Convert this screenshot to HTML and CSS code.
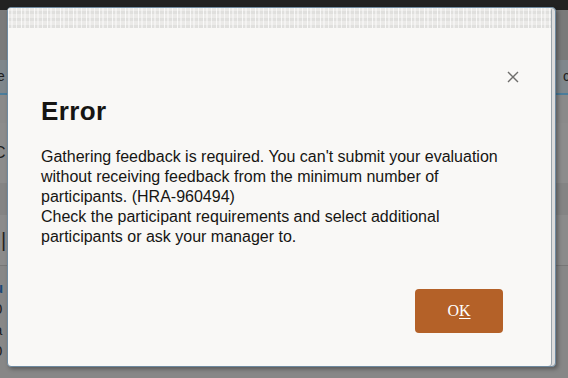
FILE: index.html
```html
<!DOCTYPE html>
<html>
<head>
<meta charset="utf-8">
<link rel="stylesheet" href="styles.css">
</head>
<body>
<div class="page">
  <div class="topbar"></div>
  <div class="header"></div>
  <div class="tabs"><span class="frag">e</span><span class="frag">c</span></div>
  <div class="row r1"></div>
  <div class="row r2"><span class="frag">C</span><span></span></div>
  <div class="row r3"></div>
  <div class="row r4"><span class="frag bar">|</span><span></span></div>
  <div class="list">
    <span class="frag blue">u</span>
    <span class="frag">0</span>
    <span class="frag">a</span>
    <span class="frag">0</span>
  </div>
</div>

<div class="dialog" role="dialog">
  <div class="texture"></div>
  <div class="dbody">
    <div class="closerow">
      <button class="close" aria-label="Close">
        <svg width="12" height="12" viewBox="0 0 12 12"><path d="M1 1 L11 11 M11 1 L1 11" stroke="#6f6e6c" stroke-width="1.4" fill="none"/></svg>
      </button>
    </div>
    <h1 class="title">Error</h1>
    <p class="msg">Gathering feedback is required. You can't submit your evaluation<br>without receiving feedback from the minimum number of<br>participants. (HRA-960494)<br>Check the participant requirements and select additional<br>participants or ask your manager to.</p>
    <div class="footer">
      <button class="ok">O<u>K</u></button>
    </div>
  </div>
</div>
</body>
</html>
```
FILE: styles.css
```css
html, body {
  margin: 0;
  padding: 0;
}
body {
  width: 568px;
  height: 378px;
  overflow: hidden;
  background: #858585;
  font-family: "Liberation Sans", Arial, sans-serif;
  position: relative;
}
.page {
  display: flex;
  flex-direction: column;
  height: 378px;
}
.topbar {
  height: 10px;
  background: #222222;
}
.header {
  height: 50px;
  background: #7a7a7a;
}
.tabs {
  height: 35px;
  background: #7f878c;
  border-bottom: 2px solid #4b7d9b;
  display: flex;
  justify-content: space-between;
  align-items: center;
  box-sizing: border-box;
  padding: 0 0 2px 0;
}
.frag {
  font-size: 14px;
  color: #1e1e1e;
  line-height: 1;
}
.tabs .frag:first-child { margin-left: -3px; }
.tabs .frag:last-child { margin-right: -2px; }
.row {
  display: flex;
  justify-content: space-between;
  align-items: center;
}
.r1 { height: 28px; background: #8a8a8a; }
.r2 { height: 60px; background: #8c8c8c; }
.r2 .frag { margin-left: -6px; font-size: 16px; }
.r3 { height: 32px; background: #848484; }
.r4 { height: 50px; background: #8b8b8b; border-bottom: 1px solid #777; }
.r4 .bar { margin-left: 1px; font-size: 20px; color: #222; }
.list {
  flex: 1;
  background: #878787;
  display: flex;
  flex-direction: column;
  padding-top: 14px;
  gap: 6px;
}
.list .frag {
  font-size: 15px;
  margin-left: -6px;
}
.list .blue { color: #1d4a78; font-weight: bold; }

.dialog {
  position: absolute;
  left: 7px;
  top: 7px;
  width: 549px;
  height: 360px;
  box-sizing: border-box;
  background: #f9f8f6;
  border: 1px solid #6f8aa0;
  border-radius: 4px;
  box-shadow: inset -3px 0 0 #dcdcdc, inset -4px 0 0 #9aa4ab, 2px 2px 4px rgba(0,0,0,0.35);
  overflow: hidden;
  display: flex;
  flex-direction: column;
}
.texture {
  height: 20px;
  margin-right: 4px;
  background-color: #ebeae8;
  background-image:
    repeating-linear-gradient(90deg, rgba(255,255,255,0.75) 0 1px, transparent 1px 3px, rgba(255,255,255,0.45) 3px 5px, transparent 5px 8px, rgba(255,255,255,0.6) 8px 9px, transparent 9px 13px),
    repeating-linear-gradient(0deg, rgba(215,215,213,0.55) 0 3px, transparent 3px 7px);
}
.dbody {
  flex: 1;
  padding: 0 0 0 33px;
  display: flex;
  flex-direction: column;
}
.closerow {
  display: flex;
  justify-content: flex-end;
  padding: 43px 36px 0 0;
  height: 12px;
}
.close {
  border: 0;
  background: transparent;
  padding: 0;
  width: 12px;
  height: 12px;
  display: block;
}
.close svg { display: block; }
.title {
  margin: 13px 0 0 0;
  font-size: 26px;
  font-weight: bold;
  line-height: 30px;
  color: #161513;
  letter-spacing: 0.4px;
}
.msg {
  margin: 21px 0 0 0;
  font-size: 16px;
  line-height: 20px;
  color: #161513;
  white-space: nowrap;
}
.footer {
  display: flex;
  justify-content: flex-end;
  padding: 0 52px 0 0;
  margin-top: 42px;
}
.ok {
  width: 88px;
  height: 44px;
  border: 0;
  border-radius: 4px;
  background: #b46128;
  color: #ffffff;
  font-family: "Liberation Serif", "Times New Roman", serif;
  font-size: 16px;
  padding: 0;
}
.ok u { text-underline-offset: 2px; }
```
